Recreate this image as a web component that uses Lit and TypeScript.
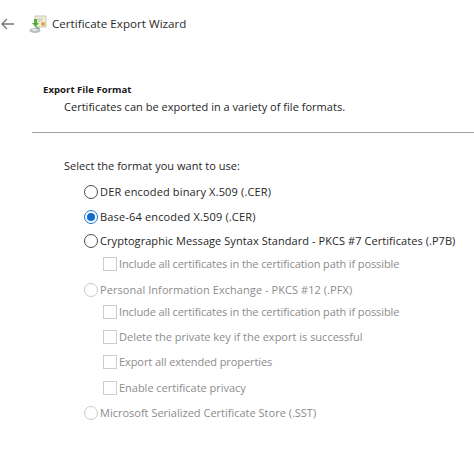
import { LitElement, html, css } from "lit";
import { customElement } from "lit/decorators.js";

type Row = { kind: "radio" | "check"; label: string; on?: boolean; off?: boolean; mt: string; track: number };

const rows: Row[] = [
  { kind: "radio", label: "DER encoded binary X.509 (.CER)", mt: "first", track: 0.15 },
  { kind: "radio", label: "Base-64 encoded X.509 (.CER)", on: true, mt: "r25", track: 0.16 },
  { kind: "radio", label: "Cryptographic Message Syntax Standard - PKCS #7 Certificates (.P7B)", mt: "r24", track: 0.065 },
  { kind: "check", label: "Include all certificates in the certification path if possible", off: true, mt: "r23", track: -0.11 },
  { kind: "radio", label: "Personal Information Exchange - PKCS #12 (.PFX)", off: true, mt: "r26", track: 0.06 },
  { kind: "check", label: "Include all certificates in the certification path if possible", off: true, mt: "r22", track: -0.11 },
  { kind: "check", label: "Delete the private key if the export is successful", off: true, mt: "r25", track: 0 },
  { kind: "check", label: "Export all extended properties", off: true, mt: "r25", track: -0.08 },
  { kind: "check", label: "Enable certificate privacy", off: true, mt: "r26", track: -0.02 },
  { kind: "radio", label: "Microsoft Serialized Certificate Store (.SST)", off: true, mt: "r25", track: 0 },
];

@customElement("app-root")
export class AppRoot extends LitElement {
  static styles = css`
    :host {
      display: block;
      width: 474px;
      height: 465px;
      overflow: hidden;
      background: #fff;
      color: #262626;
      font-family: "Open Sans", "Noto Sans", sans-serif;
      font-size: 11px;
      line-height: 16px;
      letter-spacing: 0.02px;
    }
    .top {
      display: flex;
      align-items: center;
      height: 20px;
      padding: 14px 0 0 1px;
    }
    .back { width: 13px; height: 12px; flex: none; }
    .logo { width: 18px; height: 19px; margin-left: 15px; flex: none; }
    .title { margin-left: 5px; font-size: 11.6px; color: #2a2a2a; white-space: nowrap; }
    .head { padding: 48px 0 0 43px; }
    .head b { display: block; font-weight: 700; font-size: 9.6px; color: #1a1a1a; line-height: 16px; }
    .head p { margin: 1px 0 0 21px; white-space: nowrap; }
    hr { border: 0; height: 1px; background: #a0a0a0; margin: 17px 0 0 32px; }
    .prompt { margin: 25px 0 0 64px; }
    .list { padding-left: 84px; display: flex; flex-direction: column; }
    .row { display: flex; align-items: center; height: 16px; white-space: nowrap; }
    .first { margin-top: 10px; }
    .r22 { margin-top: 6px; }
    .r23 { margin-top: 7px; }
    .r24 { margin-top: 8px; }
    .r25 { margin-top: 9px; }
    .r26 { margin-top: 10px; }
    .row.off { color: #8c8c8c; }
    .radio {
      width: 14px; height: 14px; box-sizing: border-box; flex: none;
      border: 1px solid #4d4d4d; border-radius: 50%; background: #fff;
      margin-right: 2px; display: flex; align-items: center; justify-content: center;
    }
    .off .radio { border-color: #cbcbcb; }
    .radio.on { border-color: #1a78cf; }
    .radio.on::after { content: ""; width: 8px; height: 8px; border-radius: 50%; background: #0a6fd1; }
    .check {
      width: 14px; height: 14px; box-sizing: border-box; flex: none;
      border: 1px solid #cdcdcd; background: #fff; margin: 0 2px 0 19px;
    }
    svg { display: block; }
  `;

  render() {
    return html`
      <div class="top">
        <svg class="back" viewBox="0 0 13 12" fill="none" stroke="#777" stroke-width="1.3">
          <path d="M13 6H1M6 1 1 6l5 5" />
        </svg>
        <svg class="logo" viewBox="0 0 18 19">
          <path d="M6 1h11v11H6z" fill="#f3efd8" stroke="#b9b9a4" stroke-width=".8" />
          <path d="M8 4h6M8 6h5" stroke="#b8b8b8" stroke-width=".8" />
          <circle cx="14" cy="9" r="2" fill="#d9a63a" />
          <path d="M5 4h3v4h2l-3.5 4L3 8h2z" fill="#58ad3c" />
          <path d="M7 12l4 1-3 3H5z" fill="#4f9c36" />
          <ellipse cx="6" cy="15.5" rx="5.5" ry="2.5" fill="#b9bec4" />
          <ellipse cx="6" cy="14.8" rx="3" ry="1.1" fill="#e6e8ea" />
        </svg>
        <span class="title">Certificate Export Wizard</span>
      </div>
      <div class="head">
        <b>Export File Format</b>
        <p>Certificates can be exported in a variety of file formats.</p>
      </div>
      <hr />
      <div class="prompt">Select the format you want to use:</div>
      <div class="list">
        ${rows.map(
          (r) => html`
            <div class="row ${r.mt} ${r.off ? "off" : ""}">
              <span class="${r.kind} ${r.on ? "on" : ""}"></span>
              <span style="letter-spacing:${r.track}px">${r.label}</span>
            </div>
          `
        )}
      </div>
    `;
  }
}
